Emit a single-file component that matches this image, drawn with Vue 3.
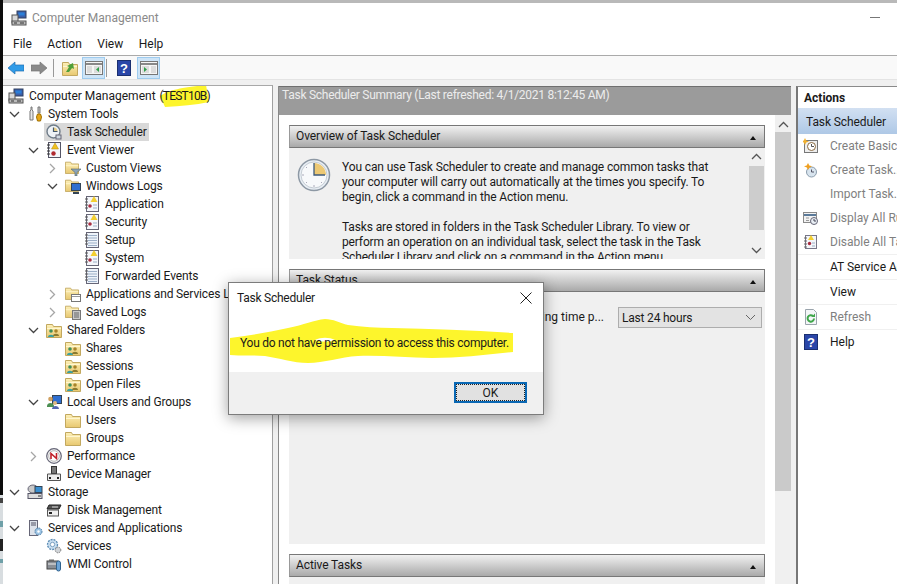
<template>
  <div class="page">
    <svg class="defs" width="0" height="0">
      <defs>
        <linearGradient id="fold" x1="0" y1="0" x2="0" y2="1"><stop offset="0" stop-color="#fdf0b8" /><stop offset="1" stop-color="#e8c870" /></linearGradient>
        <symbol id="folder" viewBox="0 0 16 16"><path d="M.5 2.500h6l1 2h8v11H.5z" fill="url(#fold)" stroke="#c2a85f" /><path d="M1 6.500h14" stroke="#fff6d0" /></symbol>
        <symbol id="computer" viewBox="0 0 16 16"><rect x="6" y="1" width="9" height="7" fill="#3b5ea8" stroke="#33415f" /><path d="M7.500 2.500h6v3h-6z" fill="#2b7fd8" /><rect x="1" y="5" width="6" height="8" fill="#d8d8d8" stroke="#555" /><rect x="1" y="11" width="14" height="4" fill="#bbb" stroke="#555" /><path d="M3 13h3M9 13h4" stroke="#333" /></symbol>
        <symbol id="tools" viewBox="0 0 16 16"><path d="M4 1v3l-1 1v9h3V5L5 4V1z" fill="#e8e8e8" stroke="#777" /><path d="M11 1h2v6h-2z" fill="#ccc" stroke="#777" /><path d="M10.500 8h3l1 3-1 4h-3l-1-4z" fill="#e8a818" stroke="#a06f00" /></symbol>
        <symbol id="sched" viewBox="0 0 16 16"><circle cx="7.500" cy="7.500" r="6.500" fill="#eef2f6" stroke="#6f7c88" stroke-width="1.400" /><path d="M7.500 7.500h4a4 4 0 0 0-4-4z" fill="#e9cf88" /><path d="M7.500 3.500v4h4" fill="none" stroke="#44586c" stroke-width="1.200" /><rect x="10" y="11" width="5" height="4" fill="#cfd8e0" stroke="#667" /></symbol>
        <symbol id="viewer" viewBox="0 0 16 16"><rect x="2.500" y=".5" width="12" height="15" fill="#f4f6fa" stroke="#556" /><path d="M1 3h3M1 6h3M1 9h3M1 12h3" stroke="#333" /><path d="M9 1l3.500 6h-7z" fill="#f0c020" stroke="#b08800" stroke-width=".5" /><circle cx="7.500" cy="11.500" r="2.200" fill="#b02a30" /></symbol>
        <symbol id="filter" viewBox="0 0 16 16"><use href="#folder" width="14" height="14" /><path d="M6 9h10l-4 3.500V16h-2v-3.500z" fill="#8ca4b8" stroke="#566" stroke-width=".6" /></symbol>
        <symbol id="flog" viewBox="0 0 16 16"><use href="#folder" width="14" height="14" /><rect x="6.500" y="5.500" width="9" height="7" fill="#2f6fd0" stroke="#345" /><path d="M8 15h6" stroke="#345" stroke-width="2" /></symbol>
        <symbol id="log" viewBox="0 0 16 16"><rect x="2.500" y=".5" width="12" height="15" fill="#eef3fa" stroke="#667" /><path d="M4 3.500h9M4 6h9M4 8.500h9M4 11h9M4 13.500h9" stroke="#9db0c8" /><path d="M1 3h3M1 6h3M1 9h3M1 12h3" stroke="#555" /></symbol>
        <symbol id="logw" viewBox="0 0 16 16"><rect x="2.500" y=".5" width="12" height="15" fill="#f4f6fa" stroke="#667" /><path d="M1 3h3M1 6h3M1 9h3M1 12h3" stroke="#555" /><path d="M10 0l3.500 6h-7z" fill="#f3cf30" /><circle cx="6" cy="10" r="1.800" fill="#a82c40" /><path d="M9 9h4M9 12h4" stroke="#9db0c8" /></symbol>
        <symbol id="fwin" viewBox="0 0 16 16"><use href="#folder" width="14" height="14" /><rect x="6.500" y="8.500" width="9" height="7" fill="#fff" stroke="#777" /><path d="M7 10.500h8" stroke="#999" /></symbol>
        <symbol id="fsaved" viewBox="0 0 16 16"><use href="#folder" width="14" height="14" /><rect x="7.500" y="6.500" width="8" height="9" fill="#c8c8c8" stroke="#777" /><path d="M9 9h5M9 11h5M9 13h5" stroke="#666" /></symbol>
        <symbol id="share" viewBox="0 0 16 16"><use href="#folder" /><circle cx="5" cy="9" r="1.800" fill="#3f8f5a" /><path d="M2 15c0-3 6-3 6 0" fill="#3aa0a0" /><circle cx="10" cy="9" r="1.800" fill="#a8842a" /><path d="M7 14c0-3 6-3 6 0" fill="#8a7a30" /></symbol>
        <symbol id="users" viewBox="0 0 16 16"><rect x="6.500" y="1.500" width="9" height="8" fill="#2f6fd0" stroke="#345" /><circle cx="4.500" cy="5" r="2.300" fill="#d0a060" /><path d="M1 12c0-4 7-4 7 0v1H1z" fill="#4c8f52" /><circle cx="9" cy="9" r="2" fill="#e0b880" /><path d="M6 15c0-4 7-4 7 0z" fill="#5468b0" /></symbol>
        <symbol id="perf" viewBox="0 0 16 16"><circle cx="8" cy="8" r="7.300" fill="#f4f4f4" stroke="#667" stroke-width="1.200" /><circle cx="8" cy="8" r="5.300" fill="#fff" stroke="#bbb" /><path d="M5 11V5.500l5.500 5V5" fill="none" stroke="#c02028" stroke-width="1.600" /></symbol>
        <symbol id="device" viewBox="0 0 16 16"><rect x="5.500" y=".5" width="5" height="7" fill="#777" stroke="#333" /><path d="M1.500 8h13v6.500h-13z" fill="#eee" stroke="#555" /><path d="M3 12h2M11 12h2" stroke="#222" stroke-width="2" /></symbol>
        <symbol id="storage" viewBox="0 0 16 16"><ellipse cx="6" cy="5" rx="5" ry="4" fill="#c8c8c8" stroke="#667" /><rect x="8" y="2.500" width="7" height="6" fill="#3b8fd0" stroke="#345" /><rect x="1" y="9.500" width="14" height="5" fill="#ddd" stroke="#556" /><path d="M11 12h3" stroke="#333" /></symbol>
        <symbol id="disk" viewBox="0 0 16 16"><path d="M3 3h12L13 7H1z" fill="#555" stroke="#222" /><path d="M6 5h6" stroke="#ddd" /><rect x="1.500" y="8" width="11" height="6" fill="#f0f0f0" stroke="#555" /><path d="M3 11h3" stroke="#222" stroke-width="2" /></symbol>
        <symbol id="svcapp" viewBox="0 0 16 16"><rect x="2.500" y=".5" width="8" height="15" fill="#dde2ea" stroke="#667" /><path d="M4 3h5M4 5h5" stroke="#556" /><circle cx="11.500" cy="11.500" r="3.500" fill="#9ec4e4" stroke="#4c7ea6" stroke-dasharray="1.500 .8" /><circle cx="11.500" cy="11.500" r="1.200" fill="#fff" /></symbol>
        <symbol id="gear" viewBox="0 0 16 16"><circle cx="6.500" cy="6.500" r="5" fill="#c8def0" stroke="#5c8cb4" stroke-width="1.300" stroke-dasharray="2 1" /><circle cx="6.500" cy="6.500" r="2.200" fill="#fff" stroke="#7aa0c0" /><circle cx="12" cy="12" r="2.800" fill="#d0d4d8" stroke="#777" stroke-dasharray="1.300 .7" /></symbol>
        <symbol id="wmi" viewBox="0 0 16 16"><rect x="1" y="5" width="11" height="8" fill="#8a8f96" stroke="#444" /><path d="M3 3.500h5V5H3z" fill="#666" /><path d="M2 8h9" stroke="#eee" /><rect x="10.500" y="5" width="4" height="10" rx="2" fill="#6ca4d8" stroke="#2f628e" /></symbol>
        <symbol id="help" viewBox="0 0 16 16"><rect x="1.500" y=".5" width="13" height="15" fill="#2a46a8" stroke="#1a2f70" /><text x="8" y="13" text-anchor="middle" font-size="13" font-weight="700" font-family="Liberation Sans, sans-serif" fill="#fff">?</text></symbol>
        <symbol id="basic" viewBox="0 0 16 16"><rect x="1.500" y="2.500" width="13" height="12" fill="#eee" stroke="#777" /><circle cx="8.500" cy="8.500" r="4" fill="#fff" stroke="#8a6a40" /><path d="M8.500 6v2.500h2.500" fill="none" stroke="#555" /><path d="M2 0l1.200 2.500L6 3.500 3.200 4.500 2 7 .8 4.500-2 3.500.8 2.500z" fill="#f0b030" /></symbol>
        <symbol id="newtask" viewBox="0 0 16 16"><circle cx="8.500" cy="10" r="5" fill="#d8e4ee" stroke="#8a9cac" /><path d="M8.500 7.500V10h2.500" fill="none" stroke="#556" /><path d="M5 1l1.300 2.500L9 4.300 6.500 5.500 5 8 3.800 5.500 1 4.300l2.700-.8z" fill="#f0a020" /></symbol>
        <symbol id="running" viewBox="0 0 16 16"><rect x=".5" y="2.500" width="13" height="10" fill="#f2f2f2" stroke="#8a8a8a" /><path d="M1 5h12" stroke="#5a7a9a" stroke-width="2" /><path d="M3 8h3M3 10.500h3" stroke="#999" /><circle cx="11" cy="11" r="3.500" fill="#e8eef4" stroke="#667" /><path d="M11 9v2h2" fill="none" stroke="#445" /></symbol>
        <symbol id="refresh" viewBox="0 0 16 16"><path d="M2.500.5h8l3 3v12h-11z" fill="#f4f6f8" stroke="#9aa4ac" /><path d="M11 9.500a3.200 3.200 0 1 1-1-2.400" fill="none" stroke="#3fa64a" stroke-width="2" /><path d="M8.500 8h3.500V4.500z" fill="#3fa64a" /></symbol>
        <symbol id="disable" viewBox="0 0 16 16"><rect x="2.500" y="1.500" width="11" height="13" fill="#f4f6fa" stroke="#778" /><path d="M1 4h3M1 7h3M1 10h3M1 13h3" stroke="#666" /><path d="M8 1l3 5H5z" fill="#f3cf30" /><circle cx="6.500" cy="9.500" r="1.700" fill="#a82c40" /><path d="M9 9h3M9 12h3" stroke="#9db0c8" /></symbol>
      </defs>
    </svg>

    <div class="strip"><div class="strip-dark" /><div class="strip-light" /></div>

    <div class="window">
      <div class="titlebar">
        <svg class="ico"><use href="#computer" /></svg>
        <span class="title">Computer Management</span>
        <span class="minimize" />
      </div>
      <div class="menubar">
        <span v-for="m in menus" :key="m">{{ m }}</span>
      </div>
      <div class="toolbar">
        <svg class="tb-ico arrow" viewBox="0 0 16 14"><path d="M0 7l7-6v3h9v6H7v3z" fill="#2f9be8" stroke="#1f6fb0" stroke-width=".7" /></svg>
        <svg class="tb-ico arrow fwd" viewBox="0 0 16 14"><path d="M16 7L9 1v3H0v6h9v3z" fill="#8a8a8a" stroke="#777" stroke-width=".7" /></svg>
        <span class="tb-sep" />
        <svg class="tb-ico up" viewBox="0 0 16 16"><use href="#folder" width="16" height="16" /><path d="M4 12l3-5-2-1 6-3 1 6-2-1-3 4z" fill="#4f9f3a" /></svg>
        <span class="tb-btn">
          <svg width="18" height="14" viewBox="0 0 18 14"><rect x=".5" y=".5" width="17" height="13" fill="#f5f5f5" stroke="#777" /><path d="M1 3h16" stroke="#888" stroke-width="2" /><path d="M2 5h5v7H2zM9 5h7v7H9z" fill="#dcdcdc" /><path d="M14 6v5l-3-2.500z" fill="#2f9f4a" /></svg>
        </span>
        <span class="tb-sep narrow" />
        <svg class="tb-ico q"><use href="#help" /></svg>
        <span class="tb-btn second">
          <svg width="18" height="14" viewBox="0 0 18 14"><rect x=".5" y=".5" width="17" height="13" fill="#f5f5f5" stroke="#777" /><path d="M1 3h16" stroke="#888" stroke-width="2" /><path d="M2 5h7v7H2zM11 5h5v7h-5z" fill="#dcdcdc" /><path d="M4 6v5l3-2.500z" fill="#2f9f4a" /></svg>
        </span>
      </div>

      <div class="panes">
        <div class="tree">
          <div v-for="row in tree" :key="row.label" class="row" :class="'lv' + row.level">
            <span class="chev">
              <svg v-if="row.open" width="11" height="7" viewBox="0 0 11 7"><path d="M1 1l4.500 4.500L10 1" fill="none" stroke="#444" stroke-width="1.300" /></svg>
              <svg v-else-if="row.closed" width="7" height="11" viewBox="0 0 7 11"><path d="M1 1l4.500 4.500L1 10" fill="none" stroke="#a6a6a6" stroke-width="1.300" /></svg>
            </span>
            <span class="item" :class="{ selected: row.selected }">
              <svg class="ico"><use :href="'#' + row.icon" /></svg>
              <span class="label">{{ row.label }}</span>
              <span v-if="row.host" class="host">
                <svg class="mark" width="52" height="23" viewBox="0 0 52 23"><path d="M1 11C8 6 18 3 47 0l3 17C36 20 22 21 6 22z" fill="#fdf52c" /></svg>
                <span class="host-text">(TEST10B)</span>
              </span>
            </span>
          </div>
        </div>

        <div class="center">
          <div class="summary">Task Scheduler Summary (Last refreshed: 4/1/2021 8:12:45 AM)</div>
          <div class="center-body">
            <div class="sections">
              <div class="sec-head">Overview of Task Scheduler<i class="tri" /></div>
              <div class="overview">
                <svg class="clock" viewBox="0 0 34 34">
                  <circle cx="17" cy="17" r="15.500" fill="#e8eef4" stroke="#8d98a4" stroke-width="1.500" />
                  <circle cx="17" cy="17" r="13" fill="#f7f9fb" stroke="#c4ccd4" />
                  <path d="M17 17V5a12 12 0 0 1 12 12z" fill="#ecc873" />
                  <path d="M17 5v12h11" fill="none" stroke="#3d5a7c" stroke-width="1.300" />
                  <path d="M17 29v-2M5 17h2M9 9l1 1M25 25l-1-1M9 25l1-1" stroke="#aab" />
                </svg>
                <div class="ov-text">
                  <p>You can use Task Scheduler to create and manage common tasks that<br>your computer will carry out automatically at the times you specify. To<br>begin, click a command in the Action menu.</p>
                  <p>Tasks are stored in folders in the Task Scheduler Library. To view or<br>perform an operation on an individual task, select the task in the Task<br>Scheduler Library and click on a command in the Action menu.</p>
                </div>
                <div class="ov-scroll">
                  <svg width="11" height="7" viewBox="0 0 11 7"><path d="M1 6l4.500-4.500L10 6" fill="none" stroke="#555" stroke-width="1.300" /></svg>
                  <span class="ov-thumb" />
                  <svg width="11" height="7" viewBox="0 0 11 7"><path d="M1 1l4.500 4.500L10 1" fill="none" stroke="#555" stroke-width="1.300" /></svg>
                </div>
              </div>
              <div class="sec-head status-head">Task Status<i class="tri" /></div>
              <div class="status">
                <span class="status-label">Status of tasks that have started in the following time p...</span>
                <div class="combo">Last 24 hours
                  <svg width="11" height="7" viewBox="0 0 11 7"><path d="M1 1l4.500 4.500L10 1" fill="none" stroke="#666" /></svg>
                </div>
              </div>
              <div class="sec-head active-head">Active Tasks<i class="tri" /></div>
              <div class="active-body" />
            </div>
            <div class="vscroll">
              <svg width="11" height="7" viewBox="0 0 11 7"><path d="M1 6l4.500-4.500L10 6" fill="none" stroke="#555" stroke-width="1.300" /></svg>
              <span class="thumb" />
            </div>
          </div>
        </div>

        <div class="actions">
          <div class="act-title">Actions</div>
          <div class="act-group">Task Scheduler</div>
          <div v-for="a in actions" :key="a.label" class="act" :class="{ off: a.off, line: a.line }">
            <svg v-if="a.icon" class="ico"><use :href="'#' + a.icon" /></svg>
            <span v-else class="ico" />
            <span class="act-label">{{ a.label }}</span>
          </div>
        </div>
      </div>
    </div>

    <div class="dialog">
      <div class="dlg-top">
        <svg class="mark2" width="286" height="46" viewBox="0 0 286 46"><path d="M1 19C20 17 40 13 59 9 75 6 85 1 96 0c8 0 15 4 23 6 14 2 30 3 44 3 40 1 80 2 121 5v19c-27 3-54 6-81 6-25 0-50-3-74-2-18 1-34 7-50 7-15 0-29-5-43-7-12-1-24 0-35-1z" fill="#fdf52c" /><path d="M86 21c6-3 14-3 20 0-6 2-14 2-20 0z" fill="#fff" /></svg>
        <div class="dlg-title">Task Scheduler
          <svg width="12" height="12" viewBox="0 0 12 12"><path d="M.5.5l11 11M11.500.5l-11 11" stroke="#222" /></svg>
        </div>
        <div class="dlg-msg">You do not have permission to access this computer.</div>
      </div>
      <div class="dlg-foot"><button class="ok">OK</button></div>
    </div>
  </div>
</template>

<script setup>
const menus = ['File', 'Action', 'View', 'Help']

const tree = [
  { level: 0, icon: 'computer', label: 'Computer Management', host: true },
  { level: 1, icon: 'tools', label: 'System Tools', open: true },
  { level: 2, icon: 'sched', label: 'Task Scheduler', selected: true },
  { level: 2, icon: 'viewer', label: 'Event Viewer', open: true },
  { level: 3, icon: 'filter', label: 'Custom Views', closed: true },
  { level: 3, icon: 'flog', label: 'Windows Logs', open: true },
  { level: 4, icon: 'logw', label: 'Application' },
  { level: 4, icon: 'logw', label: 'Security' },
  { level: 4, icon: 'log', label: 'Setup' },
  { level: 4, icon: 'logw', label: 'System' },
  { level: 4, icon: 'log', label: 'Forwarded Events' },
  { level: 3, icon: 'fwin', label: 'Applications and Services Logs', closed: true },
  { level: 3, icon: 'fsaved', label: 'Saved Logs', closed: true },
  { level: 2, icon: 'share', label: 'Shared Folders', open: true },
  { level: 3, icon: 'share', label: 'Shares' },
  { level: 3, icon: 'share', label: 'Sessions' },
  { level: 3, icon: 'share', label: 'Open Files' },
  { level: 2, icon: 'users', label: 'Local Users and Groups', open: true },
  { level: 3, icon: 'folder', label: 'Users' },
  { level: 3, icon: 'folder', label: 'Groups' },
  { level: 2, icon: 'perf', label: 'Performance', closed: true },
  { level: 2, icon: 'device', label: 'Device Manager' },
  { level: 1, icon: 'storage', label: 'Storage', open: true },
  { level: 2, icon: 'disk', label: 'Disk Management' },
  { level: 1, icon: 'svcapp', label: 'Services and Applications', open: true },
  { level: 2, icon: 'gear', label: 'Services' },
  { level: 2, icon: 'wmi', label: 'WMI Control' }
]

const actions = [
  { label: 'Create Basic Task...', icon: 'basic', off: true },
  { label: 'Create Task...', icon: 'newtask', off: true },
  { label: 'Import Task...', off: true },
  { label: 'Display All Running Tasks', icon: 'running', off: true },
  { label: 'Disable All Tasks History', icon: 'disable', off: true },
  { label: 'AT Service Account Configuration', line: true },
  { label: 'View', line: true },
  { label: 'Refresh', icon: 'refresh', off: true, line: true },
  { label: 'Help', icon: 'help', line: true }
]
</script>

<style>
html, body { margin: 0; height: 100%; overflow: hidden; }
</style>

<style scoped>
.page {
  position: relative;
  display: flex;
  width: 897px;
  height: 584px;
  overflow: hidden;
  font: 12px Roboto, sans-serif;
  color: #1a1a1a;
  background: #fff;
}
.defs { position: absolute; }
.strip { width: 3px; display: flex; flex-direction: column; flex-shrink: 0; }
.strip-dark { height: 495px; background: #0c0c0c; }
.strip-light { flex: 1; background: linear-gradient(#d8dde0 0 3px, #444 3px 8px, #d8dde0 8px 26px, #6fa0a8 26px 32px, #d8dde0 32px 44px, #222 44px 56px, #d8dde0 56px 64px, #6fa0a8 64px 68px, #d8dde0 68px); }
.window { flex: 1; min-width: 0; display: flex; flex-direction: column; border-top: 3px solid #b9b9b9; background: #f0f0f0; }
.ico { width: 16px; height: 16px; flex-shrink: 0; }

.titlebar { height: 29px; display: flex; align-items: center; padding: 0 8px; background: #fff; }
.title { margin-left: 5px; color: #8a8a8a; }
.minimize { margin-left: auto; margin-right: 9px; width: 10px; border-top: 1px solid #777; }
.menubar { height: 23px; display: flex; align-items: center; gap: 15.500px; padding: 0 10px; background: #fff; border-bottom: 1px solid #aaa; }

.toolbar { height: 23px; display: flex; align-items: center; padding: 0 5px; background: #f9f9f9; border-bottom: 1px solid #e4e4e4; }
.tb-ico { width: 16px; height: 16px; flex-shrink: 0; }
.arrow { height: 14px; }
.fwd { margin-left: 7px; }
.tb-sep { width: 1px; height: 18px; background: #999; margin: 0 8px 0 6px; }
.tb-sep.narrow { margin: 0 9px 0 1px; }
.up { margin-right: 4px; }
.tb-btn { width: 23px; height: 22px; display: flex; align-items: center; justify-content: center; background: #cde4f7; box-sizing: border-box; border: 1px solid #9ecbee; }
.second { margin-left: 5px; }

.panes { flex: 1; min-height: 0; display: flex; margin-top: 5px; }
.tree { width: 270px; flex-shrink: 0; box-sizing: border-box; background: #fff; border-top: 1px solid #a8a8a8; border-right: 1px solid #a0a0a0; padding-top: 1px; overflow: hidden; }
.row { height: 18px; display: flex; align-items: center; white-space: nowrap; }
.chev { width: 11px; height: 18px; flex-shrink: 0; display: flex; align-items: center; justify-content: center; margin-right: 7px; }
.lv0 { padding-left: 5px; }
.lv0 .chev { display: none; }
.lv1 { padding-left: 6px; }
.lv2 { padding-left: 25px; }
.lv3 { padding-left: 44px; }
.lv4 { padding-left: 63px; }
.item { height: 18px; display: flex; align-items: center; gap: 5px; }
.label { letter-spacing: -.13px; }
.lv0 .label { letter-spacing: 0; }
.selected { background: #d9d9d9; margin-left: -2px; padding: 0 2px 0 2px; }
.host { position: relative; margin-left: -1px; }
.host-text { position: relative; letter-spacing: -.8px; }
.mark { position: absolute; left: -1px; top: -4px; }

.center { flex: 1; min-width: 0; margin: 1px 0 0 5px; display: flex; flex-direction: column; background: #fff; border-left: 1px solid #888; }
.summary { height: 29px; box-sizing: border-box; flex-shrink: 0; padding: 0 3px; background: #9b9b9b; border-top: 1px solid #6f6f6f; color: #ececec; line-height: 16px; letter-spacing: -.27px; white-space: nowrap; }
.center-body { flex: 1; min-height: 0; display: flex; }
.sections { flex: 1; min-width: 0; padding: 10px 10px 0; }
.sec-head { height: 23px; box-sizing: border-box; position: relative; display: flex; align-items: center; padding: 0 0 2px 6px; background: linear-gradient(#f1f1f1, #a9a9a9); border-top: 1px solid #777; border-bottom: 1px solid #777; border-left: 1px solid #999; border-right: 1px solid #777; letter-spacing: -.1px; }
.tri { position: absolute; right: 8px; top: 10px; border: 3.500px solid transparent; border-top: 0; border-bottom: 4px solid #111; }
.overview { height: 111px; display: flex; overflow: hidden; background: #f0f0f0; }
.clock { width: 34px; height: 34px; flex-shrink: 0; margin: 10px 0 0 8px; }
.ov-text { width: 400px; margin-left: 11px; padding-top: 12px; line-height: 15px; white-space: nowrap; letter-spacing: -.13px; }
.ov-text p { margin: 0 0 15px; }
.ov-scroll { width: 15px; margin-left: auto; margin-right: 1px; display: flex; flex-direction: column; align-items: center; padding-top: 5px; background: #f0f0f0; }
.ov-scroll svg:last-child { margin-top: 17px; }
.ov-thumb { width: 15px; height: 64px; margin-top: 6px; background: #cdcdcd; }
.status-head { margin-top: 10px; }
.status { height: 252px; position: relative; display: flex; justify-content: flex-end; padding: 15px 3px 0 0; box-sizing: border-box; background: #f0f0f0; }
.status-label { margin-right: 14px; line-height: 21px; white-space: nowrap; }
.combo { width: 144px; height: 21px; box-sizing: border-box; display: flex; align-items: center; justify-content: space-between; padding: 0 5px 0 3px; background: #e3e3e3; border: 1px solid #adadad; letter-spacing: -.2px; }
.active-head { margin-top: 10px; }
.active-body { height: 7px; background: #f0f0f0; }
.vscroll { width: 16px; flex-shrink: 0; display: flex; flex-direction: column; align-items: center; padding-top: 6px; box-sizing: border-box; background: #f0f0f0; }
.thumb { width: 16px; height: 359px; margin-top: 4px; background: #cacaca; }

.actions { width: 99px; flex-shrink: 0; margin: 1px 0 0 5px; background: #fff; border-left: 2px solid #777; border-top: 1px solid #8a8a8a; overflow: hidden; white-space: nowrap; }
.act-title { height: 21px; box-sizing: border-box; padding: 4px 3px 0 6px; font-weight: 700; }
.act-group { height: 26px; box-sizing: border-box; display: flex; align-items: center; padding: 1px 0 0 8px; background: linear-gradient(#d2e0f2, #aec8e6); letter-spacing: -.1px; }
.act { height: 24px; display: flex; align-items: center; padding-left: 5px; }
.act.line { height: 25px; border-top: 1px solid #f0f0f0; box-sizing: border-box; }
.act.off { color: #7f7f7f; }
.act-label { margin-left: 11px; }

.dialog { position: absolute; left: 228px; top: 282px; width: 316px; height: 133px; box-sizing: border-box; display: flex; flex-direction: column; background: #fff; border: 1px solid #7c7c7c; box-shadow: 0 3px 14px rgba(0, 0, 0, .38); z-index: 2; }
.dlg-top { flex: 1; position: relative; }
.mark2 { position: absolute; left: 0; top: 36px; }
.dlg-title { position: relative; height: 30px; display: flex; align-items: center; justify-content: space-between; padding: 0 11px 0 8px; letter-spacing: -.25px; }
.dlg-msg { position: relative; margin: 21px 0 0 11px; line-height: 18px; white-space: nowrap; letter-spacing: -.25px; }
.dlg-foot { height: 42px; box-sizing: border-box; display: flex; justify-content: flex-end; padding: 10px 16px 0 0; background: #f0f0f0; }
.ok { width: 73px; height: 21px; padding: 0; box-sizing: border-box; font: inherit; color: inherit; background: #e1e1e1; border: 2px solid #0a68b4; outline: 1px dotted #222; outline-offset: -3px; }
</style>
